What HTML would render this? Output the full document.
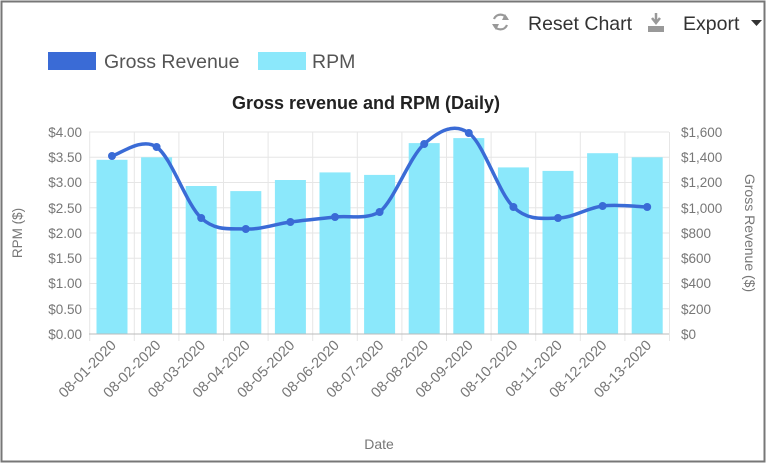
<!DOCTYPE html>
<html><head><style>
body{margin:0;width:768px;height:465px;background:#fff;overflow:hidden;font-family:"Liberation Sans",sans-serif}
</style></head><body>
<svg width="768" height="465" xmlns="http://www.w3.org/2000/svg" font-family="Liberation Sans, sans-serif">
<rect x="1.5" y="1.5" width="763" height="460" fill="#fff" stroke="#777" stroke-width="2"/>
<g fill="none" stroke="#999" stroke-width="2.2">
<path d="M494 19 A7 7 0 0 1 507 19"/><path d="M507 25 A7 7 0 0 1 494 25"/>
</g>
<path d="M505 14 L509 20 L502 20Z" fill="#999"/><path d="M496 30 L492 24 L499 24Z" fill="#999"/>
<text x="528" y="30" font-size="19.5" fill="#333">Reset Chart</text>
<path d="M656 13 v9 M652 18 l4 5 4-5" stroke="#999" stroke-width="2.5" fill="none"/>
<path d="M648 26 h16 v6 h-16z" fill="#999"/>
<text x="683" y="30" font-size="19.5" fill="#333">Export</text>
<path d="M751 20 h11 l-5.5 6z" fill="#333"/>
<rect x="48" y="52" width="48" height="18" fill="#3a6bd6"/>
<text x="104" y="68" font-size="19.5" fill="#555">Gross Revenue</text>
<rect x="258" y="52" width="48" height="18" fill="#8be8fb"/>
<text x="312" y="68" font-size="19.5" fill="#555">RPM</text>
<text x="366" y="109" font-size="18" font-weight="bold" fill="#222" text-anchor="middle">Gross revenue and RPM (Daily)</text>
<g stroke="#e6e6e6" stroke-width="1">
<line x1="89" x2="669" y1="132" y2="132"/><line x1="89" x2="669" y1="157.25" y2="157.25"/><line x1="89" x2="669" y1="182.5" y2="182.5"/><line x1="89" x2="669" y1="207.75" y2="207.75"/><line x1="89" x2="669" y1="233" y2="233"/><line x1="89" x2="669" y1="258.25" y2="258.25"/><line x1="89" x2="669" y1="283.5" y2="283.5"/><line x1="89" x2="669" y1="308.75" y2="308.75"/>
<line x1="89.7" x2="89.7" y1="132" y2="341"/><line x1="134.3" x2="134.3" y1="132" y2="341"/><line x1="178.9" x2="178.9" y1="132" y2="341"/><line x1="223.5" x2="223.5" y1="132" y2="341"/><line x1="268.1" x2="268.1" y1="132" y2="341"/><line x1="312.7" x2="312.7" y1="132" y2="341"/><line x1="357.3" x2="357.3" y1="132" y2="341"/><line x1="401.9" x2="401.9" y1="132" y2="341"/><line x1="446.5" x2="446.5" y1="132" y2="341"/><line x1="491.1" x2="491.1" y1="132" y2="341"/><line x1="535.7" x2="535.7" y1="132" y2="341"/><line x1="580.3" x2="580.3" y1="132" y2="341"/><line x1="624.9" x2="624.9" y1="132" y2="341"/><line x1="669.5" x2="669.5" y1="132" y2="341"/>
</g>
<g fill="#8be8fb">
<rect x="96.5" y="159.8" width="31" height="174.2"/>
<rect x="141.1" y="157.3" width="31" height="176.7"/>
<rect x="185.7" y="186" width="31" height="148"/>
<rect x="230.3" y="191.1" width="31" height="142.9"/>
<rect x="274.9" y="180" width="31" height="154"/>
<rect x="319.5" y="172.4" width="31" height="161.6"/>
<rect x="364.1" y="174.9" width="31" height="159.1"/>
<rect x="408.7" y="143.1" width="31" height="190.9"/>
<rect x="453.3" y="138.1" width="31" height="195.9"/>
<rect x="497.9" y="167.4" width="31" height="166.6"/>
<rect x="542.5" y="170.9" width="31" height="163.1"/>
<rect x="587.1" y="153.2" width="31" height="180.8"/>
<rect x="631.7" y="157.3" width="31" height="176.7"/>
</g>
<line x1="89" x2="669" y1="334" y2="334" stroke="#bbb"/>
<path d="M112 156 C119.4 154.5 141.7 136.7 156.6 147 C171.5 157.3 186.3 204.3 201.2 218 C216.1 231.7 230.9 228.3 245.8 229 C260.7 229.7 275.5 224 290.4 222 C305.3 220 320.1 218.7 335 217 C349.9 215.3 364.7 220 379.6 212 C394.5 199.8 409.3 157.2 424.2 144 C439.1 130.8 453.9 122.5 468.8 133 C483.7 143.5 498.5 192.8 513.4 207 C528.3 221.2 543.1 218.2 558 218 C572.9 217.8 587.7 207.8 602.6 206 C617.5 204.2 639.8 206.8 647.2 207" fill="none" stroke="#3a6bd6" stroke-width="3.5"/>
<g fill="#3a6bd6">
<circle cx="112" cy="156" r="4"/><circle cx="156.6" cy="147" r="4"/><circle cx="201.2" cy="218" r="4"/><circle cx="245.8" cy="229" r="4"/><circle cx="290.4" cy="222" r="4"/><circle cx="335" cy="217" r="4"/><circle cx="379.6" cy="212" r="4"/><circle cx="424.2" cy="144" r="4"/><circle cx="468.8" cy="133" r="4"/><circle cx="513.4" cy="207" r="4"/><circle cx="558" cy="218" r="4"/><circle cx="602.6" cy="206" r="4"/><circle cx="647.2" cy="207" r="4"/>
</g>
<g font-size="13.5" fill="#777" text-anchor="end">
<text x="82" y="137">$4.00</text><text x="82" y="162">$3.50</text><text x="82" y="187">$3.00</text><text x="82" y="213">$2.50</text><text x="82" y="238">$2.00</text><text x="82" y="263">$1.50</text><text x="82" y="288">$1.00</text><text x="82" y="314">$0.50</text><text x="82" y="339">$0.00</text>
</g>
<g font-size="13.5" fill="#777">
<text x="681" y="137">$1,600</text><text x="681" y="162">$1,400</text><text x="681" y="187">$1,200</text><text x="681" y="213">$1,000</text><text x="681" y="238">$800</text><text x="681" y="263">$600</text><text x="681" y="288">$400</text><text x="681" y="314">$200</text><text x="681" y="339">$0</text>
</g>
<text transform="translate(22,233) rotate(-90)" font-size="13.5" fill="#777" text-anchor="middle">RPM ($)</text>
<text transform="translate(745,233) rotate(90)" font-size="14" fill="#777" text-anchor="middle">Gross Revenue ($)</text>
<g font-size="14.5" fill="#777" text-anchor="end">
<text transform="translate(117,346) rotate(-45)">08-01-2020</text>
<text transform="translate(161.6,346) rotate(-45)">08-02-2020</text>
<text transform="translate(206.2,346) rotate(-45)">08-03-2020</text>
<text transform="translate(250.8,346) rotate(-45)">08-04-2020</text>
<text transform="translate(295.4,346) rotate(-45)">08-05-2020</text>
<text transform="translate(340,346) rotate(-45)">08-06-2020</text>
<text transform="translate(384.6,346) rotate(-45)">08-07-2020</text>
<text transform="translate(429.2,346) rotate(-45)">08-08-2020</text>
<text transform="translate(473.8,346) rotate(-45)">08-09-2020</text>
<text transform="translate(518.4,346) rotate(-45)">08-10-2020</text>
<text transform="translate(563,346) rotate(-45)">08-11-2020</text>
<text transform="translate(607.6,346) rotate(-45)">08-12-2020</text>
<text transform="translate(652.2,346) rotate(-45)">08-13-2020</text>
</g>
<text x="379" y="449" font-size="14" fill="#777" text-anchor="middle">Date</text>
</svg>
</body></html>
